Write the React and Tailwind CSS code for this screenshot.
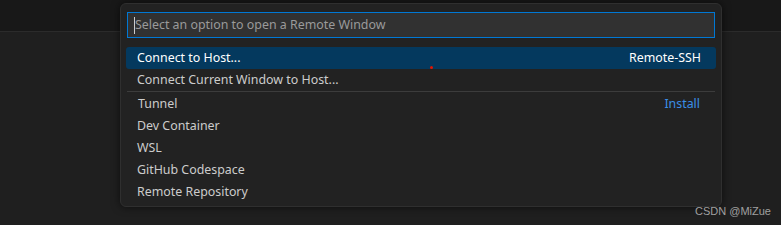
const font = { fontFamily: '"Noto Sans", "Open Sans", sans-serif' };

const rows = [
  { label: 'Connect to Host...', right: 'Remote-SSH', active: true },
  { label: 'Connect Current Window to Host...' },
  { label: 'Tunnel', right: 'Install', link: true, sep: true },
  { label: 'Dev Container' },
  { label: 'WSL' },
  { label: 'GitHub Codespace' },
  { label: 'Remote Repository' },
];

function Row({ row }) {
  return (
    <div className={row.sep ? 'border-t border-[#3c3c3c] mx-px pt-px' : ''}>
      <div className={`flex h-[22px] items-center justify-between rounded-[3px] pl-[11px] pr-[15px] text-[12.4px] ${row.active ? 'bg-[#04395e] text-white' : 'text-[#cccccc]'}`}>
        <span>{row.label}</span>
        {row.right && <span className={row.link ? 'text-[#3a8ee6]' : ''}>{row.right}</span>}
      </div>
    </div>
  );
}

export default function App() {
  return (
    <div className="relative h-[225px] w-[781px] overflow-hidden bg-[#1f1f1f]" style={font}>
      <div className="h-[32px] border-b border-[#2b2b2b] bg-[#181818]" />

      <div className="absolute left-[120px] top-[3px] w-[602px] rounded-md border border-[#2f2f2f] bg-[#222222] pb-[3px] shadow-[0_0_8px_rgba(0,0,0,0.6)]">
        <div className="px-[6px] pt-[8px]">
          <div className="flex h-[26px] items-center border border-[#0078d4] bg-[#313131] pl-[6px] text-[12.4px] text-[#9a9a9a]">
            <span className="h-[17px] w-px bg-[#cccccc]" />
            Select an option to open a Remote Window
          </div>
        </div>
        <div className="mt-[9px] px-[5px]">
          {rows.map((r) => <Row key={r.label} row={r} />)}
        </div>
        <span className="absolute left-[309px] top-[62px] h-[3px] w-[3px] rounded-full bg-[#e51400]" />
      </div>

      <div className="absolute left-[695px] top-[203px] text-[11px] text-[#a0a0a0]" style={{ fontFamily: '"Liberation Sans", Arial, sans-serif' }}>
        CSDN @MiZue
      </div>
    </div>
  );
}
